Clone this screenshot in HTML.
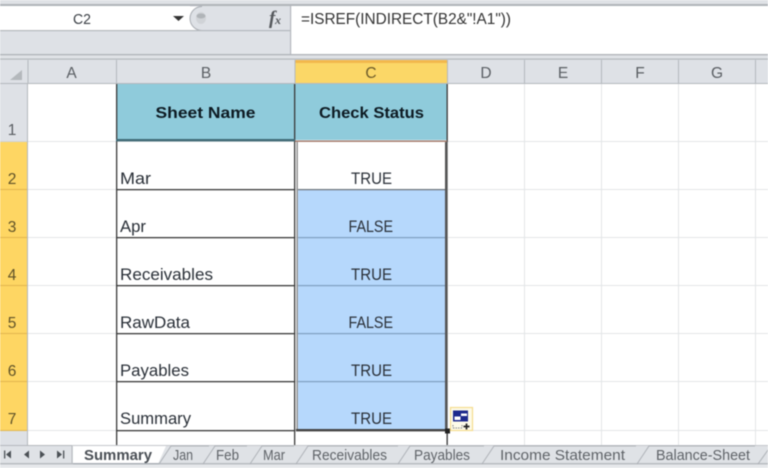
<!DOCTYPE html>
<html><head><meta charset="utf-8"><style>
html,body{margin:0;padding:0;background:#fff;width:768px;height:468px;overflow:hidden}
svg{display:block;filter:blur(0.45px)}
text{font-family:"Liberation Sans",sans-serif}
</style></head><body>
<svg width="768" height="468" viewBox="0 0 768 468" xmlns="http://www.w3.org/2000/svg">
<rect width="768" height="468" fill="#fff"/>
<!-- top -->
<rect x="0" y="0" width="768" height="6" fill="#dfe2e6"/>
<rect x="0" y="4" width="768" height="2" fill="#b0b4b9"/>
<rect x="0" y="30" width="291" height="24" fill="#dee1e6"/>
<rect x="190" y="6" width="101" height="24" fill="#dee1e6"/>
<path d="M202 6.500a12 12 0 0 0 0 24h-12v-24z" fill="#fff"/>
<path d="M202 6.500a12 12 0 0 0 0 24" fill="none" stroke="#a9adb3" stroke-width="1"/>
<rect x="0" y="30" width="291" height="1.200" fill="#b4b8bd"/>
<rect x="290" y="6" width="1.200" height="48" fill="#b4b8bd"/>
<ellipse cx="201" cy="18" rx="5" ry="6" fill="#d0d3d7"/>
<ellipse cx="201" cy="16" rx="4.500" ry="2.500" fill="#b0b4b8"/>
<path d="M173 16h11l-5.500 5z" fill="#333"/>
<text x="73" y="24" font-size="15" fill="#3a3f45" textLength="18" lengthAdjust="spacingAndGlyphs">C2</text>
<text x="269" y="24" font-size="19" font-style="italic" font-weight="bold" fill="#55585c" style="font-family:'Liberation Serif',serif">f</text>
<text x="275" y="24" font-size="12" font-style="italic" font-weight="bold" fill="#55585c" style="font-family:'Liberation Serif',serif">x</text>
<text x="301" y="24" font-size="15.500" fill="#333" textLength="210" lengthAdjust="spacingAndGlyphs">=ISREF(INDIRECT(B2&amp;"!A1"))</text>
<rect x="0" y="54" width="768" height="6" fill="#dfe2e6"/>
<rect x="0" y="54" width="768" height="1.300" fill="#b0b4b9"/>
<rect x="0" y="58.500" width="768" height="1.200" fill="#b4b8bd"/>

<!-- headers -->
<rect x="0" y="60" width="768" height="24" fill="#dee1e6"/>
<rect x="0" y="84" width="27.500" height="361" fill="#dee1e6"/>
<path d="M22 70v10h-12z" fill="#b4b8bc"/>
<rect x="295" y="60" width="152.500" height="24" fill="#fbd767"/>
<rect x="295" y="60" width="152.500" height="3" fill="#f2b84c"/>
<rect x="0" y="141" width="27.500" height="290" fill="#fed663"/>
<g fill="#b4b8bd">
<rect x="27.500" y="60" width="1" height="24"/><rect x="116" y="60" width="1" height="24"/><rect x="294.500" y="60" width="1" height="24"/><rect x="447" y="60" width="1" height="24"/><rect x="524" y="60" width="1" height="24"/><rect x="601" y="60" width="1" height="24"/><rect x="678" y="60" width="1" height="24"/><rect x="755" y="60" width="1" height="24"/>
<rect x="0" y="83" width="768" height="1"/>
</g>
<rect x="27" y="84" width="1" height="361" fill="#b4b8bd"/>
<g font-size="15.500" fill="#5a5e63" text-anchor="middle">
<text x="71.500" y="78">A</text><text x="206" y="78">B</text><text x="371" y="78" fill="#6b5a2a">C</text><text x="486" y="78">D</text><text x="563" y="78">E</text><text x="640" y="78">F</text><text x="717" y="78">G</text>
<text x="12" y="135">1</text>
<g fill="#5f5228"><text x="12" y="184">2</text><text x="12" y="232">3</text><text x="12" y="280">4</text><text x="12" y="328">5</text><text x="12" y="376">6</text><text x="12" y="424">7</text></g>
</g>
<!-- row header dividers -->
<g fill="#e2b64f">
<rect x="0" y="189" width="27" height="1"/><rect x="0" y="237" width="27" height="1"/><rect x="0" y="285" width="27" height="1"/><rect x="0" y="333" width="27" height="1"/><rect x="0" y="381" width="27" height="1"/><rect x="0" y="430" width="27" height="1"/>
</g>
<rect x="0" y="141" width="27" height="1" fill="#cfd2d6"/>

<!-- gridlines -->
<g fill="#e3e5e7">
<rect x="524" y="84" width="1" height="361"/><rect x="601" y="84" width="1" height="361"/><rect x="678" y="84" width="1" height="361"/><rect x="755" y="84" width="1" height="361"/><rect x="447" y="84" width="1" height="361"/>
<rect x="28" y="141" width="740" height="1"/><rect x="28" y="189" width="740" height="1"/><rect x="28" y="237" width="740" height="1"/><rect x="28" y="285" width="740" height="1"/><rect x="28" y="333" width="740" height="1"/><rect x="28" y="381" width="740" height="1"/><rect x="28" y="430" width="740" height="1"/>
</g>

<!-- table -->
<rect x="116.500" y="84" width="331" height="56" fill="#8fcbdb"/>
<rect x="298" y="190" width="147" height="240" fill="#b6d8fc"/>
<rect x="117" y="142" width="177" height="47" fill="#fff"/>
<rect x="298" y="142" width="146" height="47" fill="#fff"/>
<g fill="#3a3a3a">
<rect x="116" y="84" width="1.300" height="361"/>
<rect x="294" y="84" width="1.300" height="361"/>
<rect x="446.500" y="84" width="1.300" height="58"/>
<rect x="446.500" y="431" width="1.300" height="14"/>
<rect x="116" y="139" width="179" height="2.400" fill="#3f6a76"/>
<rect x="116" y="189" width="179" height="1.300"/><rect x="116" y="237" width="179" height="1.300"/><rect x="116" y="285" width="179" height="1.300"/><rect x="116" y="333" width="179" height="1.300"/><rect x="116" y="381" width="179" height="1.300"/><rect x="116" y="430" width="179" height="1.300"/>
</g>
<rect x="295" y="140.500" width="152" height="1.300" fill="#a0705f"/>
<!-- selection -->
<rect x="296.500" y="142" width="1.300" height="288" fill="#858585"/>
<rect x="445" y="142" width="2.600" height="288" fill="#555"/>
<rect x="296" y="429" width="151" height="2.400" fill="#444"/>
<rect x="298" y="189" width="147" height="1.200" fill="#6c7278"/>
<g fill="#7f9fc0">
<rect x="298" y="237" width="147" height="1.200"/><rect x="298" y="285" width="147" height="1.200"/><rect x="298" y="333" width="147" height="1.200"/><rect x="298" y="381" width="147" height="1.200"/>
</g>
<rect x="445" y="428.500" width="5" height="5" fill="#222"/>

<g font-size="16.500" fill="#2a3038">
<text x="155.500" y="118" font-size="16" font-weight="bold" fill="#0d1a22" textLength="100" lengthAdjust="spacingAndGlyphs">Sheet Name</text>
<text x="319" y="118" font-size="16" font-weight="bold" fill="#0d1a22" textLength="105" lengthAdjust="spacingAndGlyphs">Check Status</text>
<text x="120" y="184" textLength="31" lengthAdjust="spacingAndGlyphs">Mar</text>
<text x="120" y="232" textLength="26" lengthAdjust="spacingAndGlyphs">Apr</text>
<text x="120" y="280" textLength="93" lengthAdjust="spacingAndGlyphs">Receivables</text>
<text x="120" y="328" textLength="70" lengthAdjust="spacingAndGlyphs">RawData</text>
<text x="120" y="376" textLength="69" lengthAdjust="spacingAndGlyphs">Payables</text>
<text x="120" y="424" textLength="71" lengthAdjust="spacingAndGlyphs">Summary</text>
<text x="351" y="184" textLength="41" lengthAdjust="spacingAndGlyphs">TRUE</text>
<text x="348.500" y="232" textLength="44.500" lengthAdjust="spacingAndGlyphs">FALSE</text>
<text x="351" y="280" textLength="41" lengthAdjust="spacingAndGlyphs">TRUE</text>
<text x="348.500" y="328" textLength="44.500" lengthAdjust="spacingAndGlyphs">FALSE</text>
<text x="351" y="376" textLength="41" lengthAdjust="spacingAndGlyphs">TRUE</text>
<text x="351" y="424" textLength="41" lengthAdjust="spacingAndGlyphs">TRUE</text>
</g>

<!-- paste options icon -->
<rect x="450.500" y="407.500" width="22" height="23" fill="#fdfbe9" stroke="#f5dc8e" stroke-width="1.200"/>
<rect x="453" y="410.500" width="15" height="11" fill="#1d2a8c"/>
<rect x="461" y="413.500" width="6" height="2.500" fill="#fff"/>
<rect x="454.500" y="416.500" width="6" height="3.500" fill="#fff"/>
<path d="M453 428h9M453 425v3M462 425v3" stroke="#888" stroke-width="1" fill="none" stroke-dasharray="1.500 1"/>
<path d="M463.500 426.500h6M466.500 423.500v6" stroke="#222" stroke-width="1.700"/>

<!-- tab bar -->
<rect x="0" y="445" width="768" height="23" fill="#dfe2e6"/>
<rect x="0" y="445" width="72" height="1" fill="#b4b8bd"/>
<rect x="71.500" y="445" width="1" height="18" fill="#b4b8bd"/>
<rect x="0" y="463" width="768" height="1.500" fill="#b8bcc1"/>
<rect x="0" y="464.500" width="768" height="3.500" fill="#e6e8eb"/>
<rect x="72" y="445" width="696" height="1" fill="#c4c7cb"/>
<g fill="#4c5156">
<rect x="4" y="450.500" width="1.300" height="8"/><path d="M11 450.500v8l-5-4z"/>
<path d="M29 450.500v8l-5-4z"/>
<path d="M40 450.500v8l5-4z"/>
<path d="M57 450.500v8l5-4z"/><rect x="63" y="450.500" width="1.300" height="8"/>
</g>
<path d="M73 446h93l-8 18h-85z" fill="#fff"/>
<rect x="73" y="463" width="86" height="1.500" fill="#aab0b6"/>
<g fill="none" stroke="#aeb2b7" stroke-width="1">
<path d="M159 464l12-18h38"/>
<path d="M203 464l12-18h32"/>
<path d="M250 464l12-18h32"/>
<path d="M296 464l12-18h90"/>
<path d="M398 464l12-18h74"/>
<path d="M482 464l12-18h142"/>
<path d="M637 464l12-18h106"/>
<path d="M758 464l10-14"/>
</g>
<g font-size="15" fill="#5f6368">
<text x="84" y="460" font-weight="bold" fill="#4a4f55" textLength="68" lengthAdjust="spacingAndGlyphs">Summary</text>
<text x="173" y="460" textLength="20" lengthAdjust="spacingAndGlyphs">Jan</text>
<text x="216" y="460" textLength="23" lengthAdjust="spacingAndGlyphs">Feb</text>
<text x="263" y="460" textLength="22" lengthAdjust="spacingAndGlyphs">Mar</text>
<text x="312" y="460" textLength="75" lengthAdjust="spacingAndGlyphs">Receivables</text>
<text x="414" y="460" textLength="56" lengthAdjust="spacingAndGlyphs">Payables</text>
<text x="500" y="460" textLength="125" lengthAdjust="spacingAndGlyphs">Income Statement</text>
<text x="656" y="460" textLength="94" lengthAdjust="spacingAndGlyphs">Balance-Sheet</text>
</g>
</svg>
</body></html>
